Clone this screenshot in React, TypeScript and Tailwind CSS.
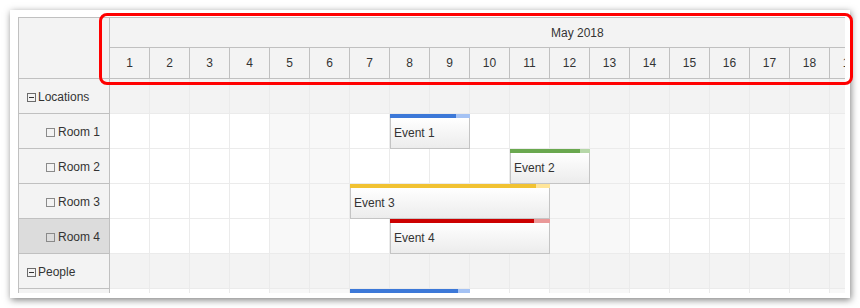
import React from 'react';

const days = Array.from({ length: 19 }, (_, i) => i + 1);
const weekend = [5, 6, 12, 13, 19];

const rows = [
  { name: 'Locations', parent: true },
  { name: 'Room 1', parent: false },
  { name: 'Room 2', parent: false },
  { name: 'Room 3', parent: false },
  { name: 'Room 4', parent: false, selected: true },
  { name: 'People', parent: true },
  { name: '', parent: false },
];

const events = [
  { id: 1, row: 1, text: 'Event 1', start: 8, span: 2, pct: 82.5, dark: 'bg-[#3c78d8]', light: 'bg-[#a4c2f4]' },
  { id: 2, row: 2, text: 'Event 2', start: 11, span: 2, pct: 87.5, dark: 'bg-[#6aa84f]', light: 'bg-[#b6d7a8]' },
  { id: 3, row: 3, text: 'Event 3', start: 7, span: 5, pct: 93, dark: 'bg-[#f1c232]', light: 'bg-[#ffe599]' },
  { id: 4, row: 4, text: 'Event 4', start: 8, span: 4, pct: 90, dark: 'bg-[#cc0000]', light: 'bg-[#ea9999]' },
  { id: 5, row: 6, text: '', start: 7, span: 3, pct: 90, dark: 'bg-[#3c78d8]', light: 'bg-[#a4c2f4]' },
];

const MinusIcon = () => (
  <span className="w-[9px] h-[9px] border border-[#6b6b6b] flex items-center justify-center shrink-0">
    <span className="w-[5px] h-px bg-[#333]" />
  </span>
);

const LeafIcon = () => <span className="w-[9px] h-[9px] border border-[#8a8a8a] shrink-0" />;

const App = () => {
  return (
    <div
      className="relative w-[860px] h-[308px] bg-white overflow-hidden text-[12px] text-[#333]"
      style={{ fontFamily: '"Liberation Sans", Arial, sans-serif' }}
    >
      <div className="ml-[10px] mt-[10px] w-[840px] h-[288px] bg-white shadow-[1px_2px_7px_rgba(0,0,0,0.5)] pl-[8px] pt-[7px]">
        <div className="w-[827px] h-[276px] overflow-hidden border-l border-t border-[#c0c0c0] flex flex-col">
          {/* header */}
          <div className="flex shrink-0">
            <div className="w-[91px] h-[61px] shrink-0 bg-[#f3f3f3] border-r border-b border-[#c0c0c0]" />
            <div className="flex flex-col shrink-0">
              <div className="h-[30px] w-[760px] bg-[#f3f3f3] border-b border-[#c0c0c0] flex items-center pl-[441px]">
                May 2018
              </div>
              <div className="flex h-[31px]">
                {days.map((d) => (
                  <div
                    key={d}
                    className="w-[40px] shrink-0 bg-[#f3f3f3] border-r border-b border-[#c0c0c0] flex items-center justify-center"
                  >
                    {d}
                  </div>
                ))}
              </div>
            </div>
          </div>

          {/* rows */}
          {rows.map((row, ri) => (
            <div key={ri} className="flex shrink-0">
              <div
                className={`w-[91px] h-[35px] shrink-0 border-r border-b border-[#c0c0c0] flex items-center pt-[2px] ${
                  row.selected ? 'bg-[#dcdcdc]' : 'bg-[#f3f3f3]'
                } ${row.parent ? 'pl-[8px] gap-[2px]' : 'pl-[27px] gap-[3px]'}`}
              >
                {row.name && (row.parent ? <MinusIcon /> : <LeafIcon />)}
                {row.name && <span>{row.name}</span>}
              </div>
              <div className="relative flex shrink-0">
                {days.map((d) => (
                  <div
                    key={d}
                    className={`w-[40px] h-[35px] shrink-0 border-r border-b border-[#ebebeb] ${
                      row.parent ? 'bg-[#f3f3f3]' : weekend.includes(d) ? 'bg-[#f8f8f8]' : 'bg-white'
                    }`}
                  />
                ))}
                {events
                  .filter((e) => e.row === ri)
                  .map((e) => (
                    <div
                      key={e.id}
                      className="absolute top-0 h-[35px] flex flex-col"
                      style={{ left: (e.start - 1) * 40, width: e.span * 40 }}
                    >
                      <div className="flex h-[4px] shrink-0">
                        <div className={e.dark} style={{ width: `${e.pct}%` }} />
                        <div className={`flex-1 ${e.light}`} />
                      </div>
                      <div className="flex-1 border-x border-b border-[#c4c4c4] bg-linear-to-b from-white to-[#ececec] flex items-center pl-[3px]">
                        {e.text}
                      </div>
                    </div>
                  ))}
              </div>
            </div>
          ))}
        </div>
      </div>

      {/* highlight */}
      <div className="absolute left-[99px] top-[13px] w-[754px] h-[72px] border-[3px] border-[#ff0000] rounded-[8px]" />
    </div>
  );
};

export default App;
